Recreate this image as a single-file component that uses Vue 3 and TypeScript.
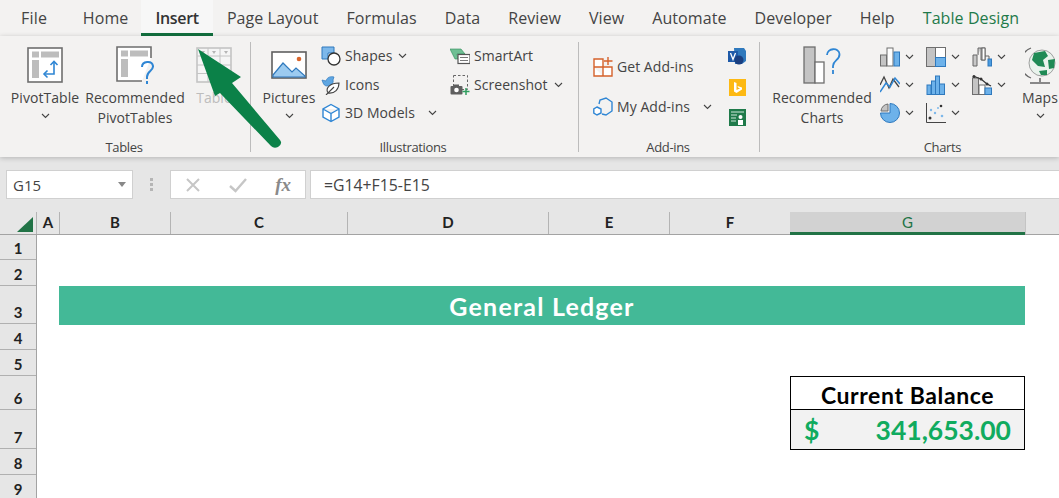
<script setup lang="ts">
const tabs: string[] = ['File', 'Home', 'Insert', 'Page Layout', 'Formulas', 'Data', 'Review', 'View', 'Automate', 'Developer', 'Help', 'Table Design']
const cols = [
  { name: 'A', width: 23 },
  { name: 'B', width: 111 },
  { name: 'C', width: 177 },
  { name: 'D', width: 201 },
  { name: 'E', width: 121 },
  { name: 'F', width: 121 },
  { name: 'G', width: 235 },
]
const rows = [25, 26, 38, 26, 26, 34, 39, 26, 26]
</script>

<template>
  <div class="app">
    <nav class="tabs">
      <span
        v-for="t in tabs"
        :key="t"
        class="tab"
        :class="{ active: t === 'Insert', design: t === 'Table Design', file: t === 'File' }"
      >{{ t }}</span>
    </nav>

    <section class="ribbon">
      <!-- Tables -->
      <div class="group g-tables">
        <div class="content">
          <div class="large w74">
            <div class="ico">
              <svg width="36" height="36" viewBox="0 0 36 36">
                <rect x="1" y="1" width="34" height="34" fill="#fff" stroke="#6e6e6e" stroke-width="1.6" />
                <rect x="5" y="4.500" width="7" height="6" fill="#bdbdbd" />
                <rect x="14" y="4.500" width="18" height="6" fill="#bdbdbd" />
                <rect x="5" y="13" width="7" height="18" fill="#bdbdbd" />
                <path d="M27 15 V27 H17" fill="none" stroke="#2f86d4" stroke-width="1.600" />
                <path d="M23.500 18 L27 14.500 L30.500 18 M20.500 23.500 L17 27 L20.500 30.500" fill="none" stroke="#2f86d4" stroke-width="1.600" />
              </svg>
            </div>
            <span>PivotTable</span>
            <svg class="chev" width="9" height="6" viewBox="0 0 9 6"><path d="M1 1 L4.500 4.500 L8 1" /></svg>
          </div>
          <div class="large w100">
            <div class="ico">
              <svg width="38" height="38" viewBox="0 0 38 38">
                <path d="M26 35 H1 V1 H35 V12" fill="#fff" stroke="#6e6e6e" stroke-width="1.600" />
                <rect x="5" y="4.500" width="7" height="6" fill="#bdbdbd" />
                <rect x="14" y="4.500" width="18" height="6" fill="#bdbdbd" />
                <rect x="5" y="13" width="7" height="18" fill="#bdbdbd" />
                <path d="M26 21 C26 15 36 14 37 20 C37.500 25 31 25 31 31 V33 M31 35 V38" fill="none" stroke="#2f86d4" stroke-width="2" />
              </svg>
            </div>
            <span>Recommended<br />PivotTables</span>
          </div>
          <div class="large w58 disabled">
            <div class="ico">
              <svg width="36" height="36" viewBox="0 0 36 36">
                <rect x="1" y="1" width="34" height="34" fill="#f5f5f5" stroke="#c4c4c4" stroke-width="1.600" />
                <path d="M1 9 H35 M1 18 H35 M1 26.500 H35 M12 1 V35 M24 1 V35" stroke="#c4c4c4" fill="none" />
                <path d="M5 4 H9 L7 7 Z M16 4 H20 L18 7 Z M28 4 H32 L30 7 Z" fill="#b5b5b5" />
              </svg>
            </div>
            <span>Table</span>
          </div>
        </div>
        <div class="label">Tables</div>
      </div>
      <div class="sep"></div>

      <!-- Illustrations -->
      <div class="group g-illus">
        <div class="content">
          <div class="large w58">
            <div class="ico pic">
              <svg width="36" height="28" viewBox="0 0 36 28">
                <rect x="1" y="1" width="34" height="26" fill="#fff" stroke="#5f5f5f" stroke-width="1.600" />
                <path d="M2 24 L12 12 L21 21 L25 17 L34 25 V26 H2 Z" fill="#9ccbf0" stroke="#2f79bd" stroke-width="1.200" />
                <circle cx="28" cy="8" r="2.300" fill="#d9662c" />
              </svg>
            </div>
            <span>Pictures</span>
            <svg class="chev" width="9" height="6" viewBox="0 0 9 6"><path d="M1 1 L4.500 4.500 L8 1" /></svg>
          </div>
          <div class="col c1">
            <div class="small">
              <svg width="20" height="20" viewBox="0 0 20 20">
                <path d="M1 1 H13 V7 H7 V13 H1 Z" fill="#7db8ea" stroke="#2f79bd" />
                <circle cx="13" cy="13" r="6" fill="#fff" stroke="#333" stroke-width="1.300" />
              </svg>
              <span>Shapes</span>
              <svg class="chev" width="9" height="6" viewBox="0 0 9 6"><path d="M1 1 L4.500 4.500 L8 1" /></svg>
            </div>
            <div class="small">
              <svg width="20" height="20" viewBox="0 0 20 20">
                <path d="M1 5 L5 6 C6 2 10 1 13 2 L12 5 C13 8 10 11 6 11 C3 11 2 8 1 5 Z" fill="#5ea6e2" stroke="#2f79bd" stroke-width=".7" />
                <path d="M7 18 C4 13 9 8 18 8 C18 14 14 19 7 18 Z M5 20 L13 12" fill="#fff" stroke="#444" stroke-width="1.100" />
              </svg>
              <span>Icons</span>
            </div>
            <div class="small">
              <svg width="20" height="20" viewBox="0 0 20 20">
                <path d="M10 1.500 L18 6 V14 L10 18.500 L2 14 V6 Z M2 6 L10 10.500 L18 6 M10 10.500 V18.500" fill="#fff" stroke="#2f86d4" stroke-width="1.400" />
              </svg>
              <span>3D Models</span>
              <svg class="chev far" width="9" height="6" viewBox="0 0 9 6"><path d="M1 1 L4.500 4.500 L8 1" /></svg>
            </div>
          </div>
          <div class="col">
            <div class="small">
              <svg width="20" height="20" viewBox="0 0 20 20">
                <path d="M0 3 H11 L15 8 H7 L8 13 H5 Z" fill="#6fbf94" stroke="#2e8b57" stroke-width=".6" />
                <rect x="8" y="8.500" width="12" height="9" fill="#fff" stroke="#555" stroke-width="1.200" />
                <path d="M10 11.500 H18 M10 14.500 H18" stroke="#777" />
              </svg>
              <span>SmartArt</span>
            </div>
            <div class="small">
              <svg width="20" height="20" viewBox="0 0 20 20">
                <rect x="3.500" y="0.500" width="14" height="14" fill="none" stroke="#666" stroke-dasharray="2.500 2" />
                <rect x="0.500" y="11" width="12" height="8.500" rx="1" fill="#5f5f5f" />
                <rect x="4" y="9.500" width="5" height="2" fill="#5f5f5f" />
                <circle cx="6.500" cy="15" r="2.300" fill="#fff" />
                <path d="M16 13 V20 M12.500 16.500 H19.500" stroke="#2f9e5f" stroke-width="1.500" />
              </svg>
              <span>Screenshot</span>
              <svg class="chev" width="9" height="6" viewBox="0 0 9 6"><path d="M1 1 L4.500 4.500 L8 1" /></svg>
            </div>
          </div>
        </div>
        <div class="label">Illustrations</div>
      </div>
      <div class="sep"></div>

      <!-- Add-ins -->
      <div class="group g-addins">
        <div class="content">
          <div class="stores">
            <div class="small tall">
              <svg width="20" height="20" viewBox="0 0 20 20">
                <path d="M10 2 H1 V19 H19 V10 H10 Z M1 10 H10 V19" fill="#fff" stroke="#d5622b" stroke-width="1.400" />
                <path d="M15 0 V8 M11 4 H19.500" stroke="#d5622b" stroke-width="1.400" />
              </svg>
              <span>Get Add-ins</span>
            </div>
            <div class="small tall">
              <svg width="20" height="20" viewBox="0 0 20 20">
                <path d="M6 7 L7 3 L13 1 L19 5 V14 L13 18 L9 17" fill="none" stroke="#2f86d4" stroke-width="1.400" />
                <path d="M4 10 L8 12 V16 L4 18 L0.800 16 V12 Z" fill="#fff" stroke="#2f86d4" stroke-width="1.400" />
              </svg>
              <span>My Add-ins</span>
              <svg class="chev far2" width="9" height="6" viewBox="0 0 9 6"><path d="M1 1 L4.500 4.500 L8 1" /></svg>
            </div>
          </div>
          <div class="apps">
            <svg width="18" height="18" viewBox="0 0 18 18">
              <path d="M6 0 H16 L18 3 V13 L14 16 H7 Z" fill="#2f79bd" />
              <rect x="0" y="3" width="10" height="11" fill="#1e5aa8" />
              <circle cx="11" cy="12" r="4.500" fill="#1a3f80" />
              <path d="M2.500 5 L5 11.500 L7.500 5" fill="none" stroke="#fff" stroke-width="1.300" />
            </svg>
            <svg width="17" height="17" viewBox="0 0 17 17">
              <rect width="17" height="17" fill="#fdb913" />
              <path d="M5 3 L7.500 4 V11 L11 9.500 L9 8.500 L8.500 7 L13 8.500 V10.500 L7.500 14 L5 12.500 Z" fill="#fff" />
            </svg>
            <svg width="17" height="17" viewBox="0 0 17 17">
              <rect width="17" height="17" fill="#1f7a4a" />
              <path d="M2 3 H15 M2 6 H8 M2 9 H7 M2 12 H7" stroke="#cfe7da" />
              <circle cx="11.500" cy="8" r="2" fill="#fff" />
              <path d="M9 11 H14 V16 H9 Z" fill="#fff" />
            </svg>
          </div>
        </div>
        <div class="label">Add-ins</div>
      </div>
      <div class="sep"></div>

      <!-- Charts -->
      <div class="group g-charts">
        <div class="content">
          <div class="large w100">
            <div class="ico">
              <svg width="38" height="38" viewBox="0 0 38 38">
                <rect x="1" y="1" width="11" height="36" fill="#c4c4c4" stroke="#6e6e6e" stroke-width="1.300" />
                <rect x="12" y="16" width="9" height="21" fill="#fff" stroke="#6e6e6e" stroke-width="1.300" />
                <path d="M24 9 C24 2 36 1 36.500 8 C37 14 30 14 30 20 V22 M30 24 V28" fill="none" stroke="#2f86d4" stroke-width="1.800" />
              </svg>
            </div>
            <span>Recommended<br />Charts</span>
          </div>
          <div class="chart-grid">
            <div class="ci">
              <svg width="20" height="20" viewBox="0 0 20 20">
                <rect x="0.500" y="8" width="6" height="11" fill="#c4c4c4" stroke="#6e6e6e" />
                <rect x="7" y="1" width="6" height="18" fill="#fff" stroke="#6e6e6e" />
                <rect x="14" y="5" width="5.500" height="14" fill="#6db2ea" stroke="#2f79bd" />
              </svg>
              <svg class="chev" width="9" height="6" viewBox="0 0 9 6"><path d="M1 1 L4.500 4.500 L8 1" /></svg>
            </div>
            <div class="ci">
              <svg width="20" height="20" viewBox="0 0 20 20">
                <rect x="0.500" y="0.500" width="9" height="19" fill="#c4c4c4" stroke="#6e6e6e" />
                <rect x="9.500" y="0.500" width="10" height="10" fill="#fff" stroke="#6e6e6e" />
                <rect x="9.500" y="10.500" width="10" height="9" fill="#6db2ea" stroke="#2f79bd" />
              </svg>
              <svg class="chev" width="9" height="6" viewBox="0 0 9 6"><path d="M1 1 L4.500 4.500 L8 1" /></svg>
            </div>
            <div class="ci">
              <svg width="20" height="20" viewBox="0 0 20 20">
                <path d="M1 19 V8 H5 V19 Z M6 8 V1 H9 M9 1 H13 V13 H9 Z" fill="#c8c8c8" stroke="#666" />
                <rect x="10" y="1" width="3" height="12" fill="#fff" stroke="#666" />
                <rect x="16" y="12" width="3.500" height="7" fill="#4b9ce0" stroke="#2f79bd" />
                <path d="M13 9 H17 V12" fill="none" stroke="#666" />
              </svg>
              <svg class="chev" width="9" height="6" viewBox="0 0 9 6"><path d="M1 1 L4.500 4.500 L8 1" /></svg>
            </div>
            <div class="ci">
              <svg width="20" height="20" viewBox="0 0 20 20">
                <path d="M0 10 L4 2 L9 13 L13 4 L19 12" fill="none" stroke="#444" stroke-width="1.300" />
                <path d="M0 17 L6 8 L10 12 L15 3 L20 9" fill="none" stroke="#2f86d4" stroke-width="1.500" />
              </svg>
              <svg class="chev" width="9" height="6" viewBox="0 0 9 6"><path d="M1 1 L4.500 4.500 L8 1" /></svg>
            </div>
            <div class="ci">
              <svg width="20" height="20" viewBox="0 0 20 20">
                <rect x="1" y="10" width="4" height="9.500" fill="#6db2ea" stroke="#2f79bd" />
                <rect x="5.500" y="6" width="4" height="13.500" fill="#6db2ea" stroke="#2f79bd" />
                <rect x="9.500" y="1" width="4" height="18.500" fill="#6db2ea" stroke="#2f79bd" />
                <rect x="13.500" y="9" width="5" height="10.500" fill="#6db2ea" stroke="#2f79bd" />
              </svg>
              <svg class="chev" width="9" height="6" viewBox="0 0 9 6"><path d="M1 1 L4.500 4.500 L8 1" /></svg>
            </div>
            <div class="ci">
              <svg width="20" height="20" viewBox="0 0 20 20">
                <rect x="0.500" y="3" width="6" height="16.500" fill="#c4c4c4" stroke="#6e6e6e" />
                <rect x="7" y="10" width="6" height="9.500" fill="#fff" stroke="#6e6e6e" />
                <rect x="13" y="13" width="6.500" height="6.500" fill="#6db2ea" stroke="#2f79bd" />
                <path d="M1 1 L9 4 L15 9 L19 11" fill="none" stroke="#333" stroke-width="1.300" />
                <circle cx="2" cy="1.500" r="1.500" fill="#333" /><circle cx="9" cy="4" r="1.500" fill="#333" /><circle cx="15" cy="9" r="1.500" fill="#333" />
              </svg>
              <svg class="chev" width="9" height="6" viewBox="0 0 9 6"><path d="M1 1 L4.500 4.500 L8 1" /></svg>
            </div>
            <div class="ci">
              <svg width="20" height="20" viewBox="0 0 20 20">
                <path d="M10 10 V0.500 A9.500 9.500 0 1 1 0.500 10 Z" fill="#6db2ea" stroke="#2f79bd" />
                <path d="M8 8 V1 A7.500 7.500 0 0 0 1 8 Z" fill="#c4c4c4" stroke="#6e6e6e" />
              </svg>
              <svg class="chev" width="9" height="6" viewBox="0 0 9 6"><path d="M1 1 L4.500 4.500 L8 1" /></svg>
            </div>
            <div class="ci">
              <svg width="20" height="20" viewBox="0 0 20 20">
                <path d="M0.500 0 V19.500 H20" fill="none" stroke="#444" />
                <circle cx="4" cy="15" r="1.500" fill="#333" /><circle cx="15" cy="3" r="1.300" fill="#333" />
                <circle cx="5" cy="7" r="1.200" fill="#7db8ea" /><circle cx="9" cy="10" r="1.200" fill="#7db8ea" />
                <circle cx="16" cy="13" r="1.300" fill="#7db8ea" /><circle cx="12" cy="5" r="1" fill="#7db8ea" />
              </svg>
              <svg class="chev" width="9" height="6" viewBox="0 0 9 6"><path d="M1 1 L4.500 4.500 L8 1" /></svg>
            </div>
          </div>
          <div class="large w44">
            <div class="ico">
              <svg width="31" height="38" viewBox="0 0 31 38">
                <path d="M6 2 A16 16 0 0 0 6 32" fill="none" stroke="#666" stroke-width="1.300" />
                <circle cx="17" cy="17" r="13" fill="#e9f3ec" stroke="#8a8a8a" stroke-width=".8" />
                <path d="M9 7 L20 5 L23 10 L18 14 L20 21 L13 20 L7 14 Z M23 14 L30 13 L29 22 L24 23 Z M14 25 L22 24 L22 29 L16 29 Z" fill="#1f8a55" />
                <path d="M15 32 V36 M5 37 H25" stroke="#666" stroke-width="1.500" />
              </svg>
            </div>
            <span>Maps</span>
            <svg class="chev" width="9" height="6" viewBox="0 0 9 6"><path d="M1 1 L4.500 4.500 L8 1" /></svg>
          </div>
        </div>
        <div class="label">Charts</div>
      </div>
    </section>

    <section class="formula">
      <div class="namebox">
        <span>G15</span>
        <i class="caret"></i>
      </div>
      <div class="dots"><b></b><b></b><b></b></div>
      <div class="fxbox">
        <svg width="16" height="16" viewBox="0 0 16 16"><path d="M2 2 L14 14 M14 2 L2 14" stroke="#c6c6c6" stroke-width="2" /></svg>
        <svg width="18" height="16" viewBox="0 0 18 16"><path d="M1 9 L6.500 14 L17 2" fill="none" stroke="#c6c6c6" stroke-width="2.400" /></svg>
        <em>fx</em>
      </div>
      <div class="fbox">=G14+F15-E15</div>
    </section>

    <header class="colhead">
      <div class="corner">
        <svg width="16" height="15" viewBox="0 0 16 15"><path d="M0 15 L16 0 V15 Z" fill="#217346" /></svg>
      </div>
      <div
        v-for="c in cols"
        :key="c.name"
        class="ch"
        :class="{ sel: c.name === 'G' }"
        :style="{ width: c.width + 'px' }"
      >{{ c.name }}</div>
      <div class="ch rest"></div>
    </header>

    <main class="body">
      <div class="rowhead">
        <div v-for="(h, i) in rows" :key="i" class="rh" :style="{ height: h + 'px' }">{{ i + 1 }}</div>
      </div>
      <div class="sheet">
        <div class="title">General Ledger</div>
        <div class="bal-h">Current Balance</div>
        <div class="bal-v"><span>$</span><span>341,653.00</span></div>
      </div>
    </main>

    <svg class="arrow" width="100" height="110" viewBox="0 0 100 110">
      <path d="M1 3 L44 31 L35 37 L83 94 Q86 98 81 101 Q77 103 74 100 L23 47 L18 50 Z" fill="#0b8148" />
    </svg>
  </div>
</template>

<style>
html, body { margin: 0; background: #fff; }
</style>

<style scoped>
.app {
  position: relative;
  width: 1059px;
  height: 498px;
  overflow: hidden;
  background: #fff;
  font-family: "Open Sans", "Noto Sans", sans-serif;
  color: #444;
  font-size: 14px;
}
.tabs {
  display: flex;
  height: 36px;
  padding-left: 7px;
  background: #f3f2f1;
  box-sizing: border-box;
  font-size: 16px;
}
.tab {
  padding: 0 14px;
  line-height: 36px;
  letter-spacing: .08px;
  white-space: nowrap;
}
.tab.file { margin-right: 7.500px; letter-spacing: .25px; }
.tab.active {
  font-weight: 600;
  color: #333;
  background: #f7f7f7;
  border-bottom: 3px solid #12703f;
  box-sizing: border-box;
  height: 36px;
  margin-left: -1px;
  letter-spacing: -.3px;
}
.tab.design { color: #1f7a4a; }

.ribbon {
  display: flex;
  height: 121px;
  box-sizing: border-box;
  padding: 6px 0 1px;
  background: #f3f2f1;
  box-shadow: 0 1px 5px rgba(0, 0, 0, .22);
  position: relative;
  line-height: 20px;
  letter-spacing: .05px;
}
.group { display: flex; flex-direction: column; flex: none; }
.g-tables { width: 250px; padding-left: 8px; box-sizing: border-box; }
.g-illus { width: 327px; padding-left: 9px; box-sizing: border-box; }
.g-addins { width: 180px; padding-left: 14px; box-sizing: border-box; }
.g-charts { width: 299px; padding-left: 12px; box-sizing: border-box; }
.sep { flex: none; width: 1px; height: 110px; background: #bcbcbc; }
.content { display: flex; flex: 1; min-height: 0; }
.label { height: 18px; line-height: 18px; text-align: center; font-size: 13px; letter-spacing: -.35px; }
.g-tables .label { padding-right: 10px; }
.g-illus .label { padding-right: 12px; }
.g-addins .label { padding-right: 16px; }
.g-charts .label { padding-left: 54px; }

.large {
  display: flex;
  flex-direction: column;
  align-items: center;
  text-align: center;
  flex: none;
  white-space: nowrap;
}
.w74 { width: 74px; margin-right: 3px; }
.w100 { width: 100px; }
.w58 { width: 58px; }
.w44 { width: 44px; }
.ico { height: 46px; display: flex; align-items: center; justify-content: center; }
.disabled { color: #bdbdbd; }

.chev { fill: none; stroke: #444; stroke-width: 1.100; flex: none; }
.large .chev { margin-top: 5px; }

.col { display: flex; flex-direction: column; margin-left: 3px; }
.c1 { width: 126px; }
.small {
  display: flex;
  align-items: center;
  height: 28.500px;
  white-space: nowrap;
}
.small > span { margin-left: 4px; }
.small .chev { margin-left: 6px; }
.small .chev.far { margin-left: 13px; }
.small .chev.far2 { margin-left: 13px; }
.stores { width: 135px; padding-top: 5px; flex: none; }
.small.tall { height: 40px; }
.apps {
  display: flex;
  flex-direction: column;
  align-items: center;
  width: 18px;
  padding-top: 6px;
  gap: 13px;
}
.chart-grid {
  display: grid;
  grid-template-columns: repeat(3, 46px);
  grid-auto-rows: 28px;
  margin-left: 8px;
  padding-top: 1px;
  flex: none;
}
.ci { display: flex; align-items: center; gap: 5px; }

.formula {
  display: flex;
  align-items: flex-start;
  height: 55px;
  box-sizing: border-box;
  padding: 13px 0 0 6px;
  background: #e6e6e6;
}
.namebox, .fxbox, .fbox {
  height: 29px;
  box-sizing: border-box;
  background: #fff;
  border: 1px solid #d0d0d0;
  display: flex;
  align-items: center;
}
.namebox {
  width: 127px;
  padding: 0 6px;
  justify-content: space-between;
  font-size: 15px;
}
.caret {
  width: 0; height: 0;
  border-left: 4px solid transparent;
  border-right: 4px solid transparent;
  border-top: 5px solid #888;
}
.dots {
  width: 37px;
  height: 29px;
  display: flex;
  flex-direction: column;
  align-items: center;
  justify-content: center;
  gap: 2px;
}
.dots b { width: 3px; height: 3px; background: #b5b5b5; }
.fxbox {
  width: 136px;
  padding: 0 14px;
  justify-content: space-between;
  margin-right: 4px;
}
.fxbox em {
  font-family: "Liberation Serif", serif;
  font-size: 19px;
  font-weight: 700;
  color: #8a8a8a;
}
.fbox {
  flex: 1;
  padding-left: 13px;
  border-right: 0;
  font-size: 15.800px;
}

.colhead {
  display: flex;
  height: 23px;
  box-sizing: border-box;
  background: #e6e6e6;
  border-bottom: 1px solid #a3a3a3;
  font-family: Lato, sans-serif;
  font-weight: 700;
  font-size: 15px;
  color: #222;
}
.corner {
  width: 36px;
  flex: none;
  box-sizing: border-box;
  display: flex;
  justify-content: flex-end;
  align-items: flex-end;
  padding: 0 3px 2px 0;
}
.ch {
  flex: none;
  box-sizing: border-box;
  text-align: center;
  line-height: 21px;
  border-left: 1px solid #b4b4b4;
}
.ch.sel {
  background: #d2d2d2;
  color: #217346;
  font-weight: 400;
  border-left: 0;
  height: 23px;
  border-bottom: 3px solid #217346;
}
.ch.rest { flex: 1; border-left: 1px solid #c4c4c4; }

.body { display: flex; height: 263px; overflow: hidden; }
.rowhead {
  width: 37px;
  flex: none;
  box-sizing: border-box;
  background: #e6e6e6;
  border-right: 1px solid #a3a3a3;
  font-family: Lato, sans-serif;
  font-weight: 700;
  font-size: 15px;
  color: #222;
}
.rh {
  box-sizing: border-box;
  border-bottom: 1px solid #b0b0b0;
  display: flex;
  align-items: flex-end;
  justify-content: center;
  padding-bottom: 1px;
  line-height: 20px;
}
.sheet {
  flex: 1;
  display: grid;
  grid-template-columns: 22px 111px 177px 201px 121px 121px 235px 1fr;
  grid-template-rows: 25px 26px 39px 25px 26px 34px 40px 26px 26px;
}
.title {
  grid-column: 2 / 8;
  grid-row: 3;
  background: #43b997;
  color: #fff;
  font-family: Lato, sans-serif;
  font-weight: 700;
  font-size: 25px;
  letter-spacing: 1.200px;
  display: flex;
  align-items: center;
  justify-content: center;
}
.bal-h {
  grid-column: 7;
  grid-row: 6;
  border: 1px solid #000;
  color: #000;
  font-family: Lato, sans-serif;
  font-weight: 700;
  font-size: 23px;
  letter-spacing: .6px;
  display: flex;
  align-items: center;
  justify-content: center;
  padding-top: 4px;
  box-sizing: border-box;
}
.bal-v {
  grid-column: 7;
  grid-row: 7;
  border: 1px solid #000;
  border-top: 0;
  background: #f2f2f2;
  color: #10ab5f;
  font-family: Lato, sans-serif;
  font-weight: 700;
  font-size: 26.500px;
  display: flex;
  align-items: center;
  justify-content: space-between;
  padding: 0 13px;
  box-sizing: border-box;
}

.arrow {
  position: absolute;
  left: 197px;
  top: 46px;
  pointer-events: none;
}
</style>
